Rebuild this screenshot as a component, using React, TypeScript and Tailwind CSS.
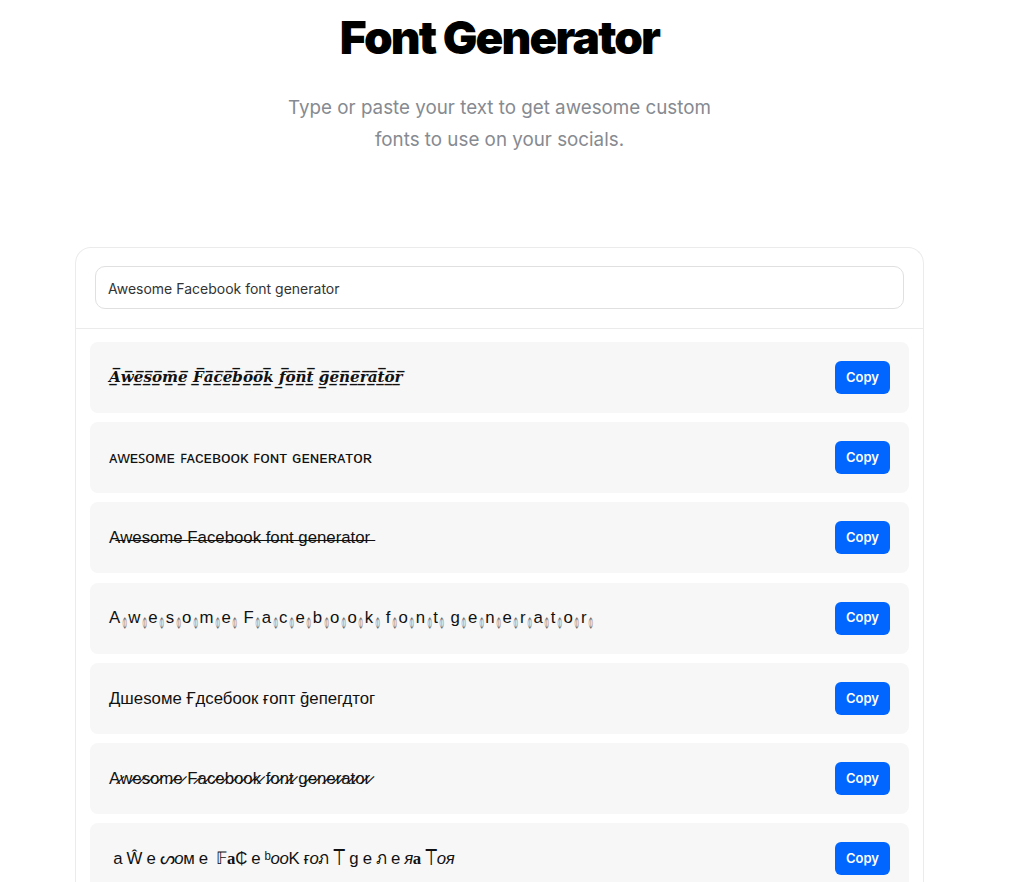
const sans = "font-['Liberation_Sans',sans-serif] text-[16.8px]"

// the generator puts a small stile glyph after every letter
function Stile({ word }: { word: string }) {
  return (
    <>
      {word.split('').map((c, i) => (
        <span key={i}>
          {c}
          <span className="inline-block w-[8px] text-center text-[9px] leading-none text-[#666] scale-y-[2.3] translate-y-[3px]">⌽</span>
        </span>
      ))}
    </>
  )
}

const serifA = <b className="font-['Liberation_Serif',serif]">a</b>
const tack = <span className="text-[21px] leading-none">⟙</span>

const rows = [
  { text: 'A̲̅w̲̅e̲̅s̲̅o̲̅m̲̅e̲̅ F̲̅a̲̅c̲̅e̲̅b̲̅o̲̅o̲̅k̲̅ f̲̅o̲̅n̲̅t̲̅ g̲̅e̲̅n̲̅e̲̅r̲̅a̲̅t̲̅o̲̅r̲̅', cls: "font-['DejaVu_Serif',serif] font-bold italic text-[15.15px]" },
  { text: 'ᴀᴡᴇꜱᴏᴍᴇ ꜰᴀᴄᴇʙᴏᴏᴋ ꜰᴏɴᴛ ɢᴇɴᴇʀᴀᴛᴏʀ', cls: "font-['Liberation_Sans',sans-serif] text-[17.1px]" },
  { text: 'A̶w̶e̶s̶o̶m̶e̶ ̶F̶a̶c̶e̶b̶o̶o̶k̶ ̶f̶o̶n̶t̶ ̶g̶e̶n̶e̶r̶a̶t̶o̶r̶', cls: sans },
  {
    text: (
      <>
        <Stile word="Awesome" /> <Stile word="Facebook" /> <Stile word="font" /> <Stile word="generator" />
      </>
    ),
    cls: sans,
  },
  { text: 'Дшеsоме Ғдсебоок ғопт ğепегдтог', cls: sans },
  { text: 'A̷w̷e̷s̷o̷m̷e̷ F̷a̷c̷e̷b̷o̷o̷k̷ f̷o̷n̷t̷ g̷e̷n̷e̷r̷a̷t̷o̷r̷', cls: sans },
  {
    text: (
      <>
        {' a Ŵ e ᔕ'}<i>o</i>{'м e  𝔽'}{serifA}{'₵ e ᵇ'}<i>oo</i>{'K ғ'}<i>o</i>{'ภ '}{tack}{' g e ภ e '}<i>я</i>{serifA}{' '}{tack}<i>oя</i>
      </>
    ),
    cls: sans + ' tracking-[-0.35px]',
  },
]

export default function App() {
  return (
    <div className="bg-white w-[999px] h-[882px] overflow-hidden font-['Inter',sans-serif]">
      <div className="text-center pt-[9px]">
        <h1 className="text-[46px] leading-[56px] font-black tracking-[-1.85px] text-black">Font Generator</h1>
        <p className="mt-[27px] text-[18.8px] leading-[32px] text-[#868a91]">
          Type or paste your text to get awesome custom
          <br />
          fonts to use on your socials.
        </p>
      </div>

      <div className="mx-[75px] mt-[91px] rounded-t-[16px] border border-b-0 border-[#ebebeb]">
        <div className="px-[19px] pt-[18px] pb-[19px] border-b border-[#ebebeb]">
          <div className="h-[43px] rounded-[10px] border border-[#e0e0e0] px-[12px] pt-px flex items-center text-[14px] text-[#333]">
            Awesome Facebook font generator
          </div>
        </div>
        <div className="px-[14px] pt-[13px] flex flex-col gap-[9.2px]">
          {rows.map((r, i) => (
            <div key={i} className="h-[71px] shrink-0 rounded-[8px] bg-[#f7f7f7] px-[19px] flex items-center justify-between">
              <span className={`${r.cls} text-[#111] whitespace-pre`}>{r.text}</span>
              <button className="w-[55px] h-[33px] rounded-[6px] bg-[#0066ff] text-white text-[13px] font-semibold">Copy</button>
            </div>
          ))}
        </div>
      </div>
    </div>
  )
}
